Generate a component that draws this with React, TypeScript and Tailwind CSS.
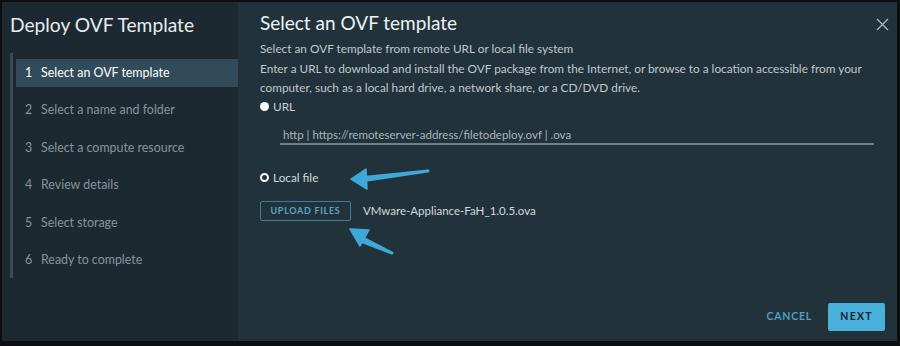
import React from "react";

const steps = [
  "Select an OVF template",
  "Select a name and folder",
  "Select a compute resource",
  "Review details",
  "Select storage",
  "Ready to complete",
];

export default function App() {
  return (
    <div
      className="w-[900px] h-[346px] bg-[#0b0f12] pt-[2px] pl-[2px] pr-[3px] pb-[5px] flex"
      style={{ fontFamily: "Lato, 'Noto Sans', sans-serif" }}
    >
      {/* Sidebar */}
      <div className="w-[236px] h-full bg-[#1d2931] flex flex-col">
        <div className="pl-[8px] pt-[10px] text-[19.2px] leading-[26px] text-[#e6ecef] whitespace-nowrap">
          Deploy OVF Template
        </div>
        <div className="ml-[8px] mt-[15px] border-l-[3px] border-[#3c4a52] flex flex-col h-[225px]">
          {steps.map((s, i) => (
            <div
              key={s}
              className={
                "flex items-center h-[28px] ml-[3px] pl-[9px] text-[12.4px] whitespace-nowrap " +
                (i === 0
                  ? "bg-[#324b5a] text-white mt-[6px]"
                  : "text-[#86949b] mt-[9.5px]")
              }
            >
              <span className="w-[16px]">{i + 1}</span>
              <span>{s}</span>
            </div>
          ))}
        </div>
      </div>

      {/* Main */}
      <div className="relative flex-1 h-full bg-[#21323a] pl-[22px] pr-[22px] flex flex-col">
        <div className="flex items-start justify-between pt-[8px]">
          <div className="text-[19px] leading-[26px] text-[#eef2f4] whitespace-nowrap">Select an OVF template</div>
          <svg width="13" height="13" viewBox="0 0 13 13" className="mt-[8px] mr-[-14px]">
            <path d="M1 1 L12 12 M12 1 L1 12" stroke="#aeb8bd" strokeWidth="1.3" />
          </svg>
        </div>
        <div className="mt-[3px] text-[11.8px] leading-[19.5px] text-[#c0c9cd] whitespace-nowrap">
          <div>Select an OVF template from remote URL or local file system</div>
          <div>
            Enter a URL to download and install the OVF package from the Internet, or browse to a location accessible from your
          </div>
          <div>computer, such as a local hard drive, a network share, or a CD/DVD drive.</div>
        </div>
        <div className="flex items-center gap-[4px] text-[11.8px] text-[#c9d1d5] h-[18px]">
          <span className="w-[9px] h-[9px] rounded-full bg-white inline-block" />
          <span>URL</span>
        </div>
        <div className="ml-[20px] mr-[1px] mt-[12px] border-b-[2px] border-[#6d8088] pb-[1px] pl-[3px] text-[11.5px] leading-[14px] text-[#aab5ba] whitespace-nowrap">
          http | https://remoteserver-address/filetodeploy.ovf | .ova
        </div>
        <div className="flex items-center gap-[4px] text-[11.8px] text-[#d3dade] mt-[24px] h-[18px]">
          <span className="w-[9px] h-[9px] rounded-full border-[2.5px] border-white bg-[#21323a] inline-block" />
          <span>Local file</span>
        </div>
        <div className="flex items-center mt-[14px]">
          <div className="h-[20px] w-[91px] border border-[#3f7c97] rounded-[2px] flex items-center justify-center text-[9px] font-bold tracking-[0.7px] text-[#5aa5c6]">
            UPLOAD FILES
          </div>
          <div className="ml-[12px] text-[11.5px] text-[#d3dade] whitespace-nowrap">VMware-Appliance-FaH_1.0.5.ova</div>
        </div>
        <div className="flex-1" />
        <div className="flex items-center justify-end gap-[16px] pb-[10px] mr-[-10px]">
          <div className="text-[10.5px] font-bold tracking-[0.8px] text-[#4e9fc2]">CANCEL</div>
          <div className="h-[28px] w-[57px] bg-[#49afdb] rounded-[2px] flex items-center justify-center text-[10.5px] font-bold tracking-[1.2px] text-[#17262e]">
            NEXT
          </div>
        </div>

        {/* annotation arrows */}
        <svg className="absolute left-0 top-0 pointer-events-none" width="659" height="339" viewBox="0 0 659 339">
          <g fill="#3ea8d8" stroke="#3ea8d8" strokeLinecap="round" strokeLinejoin="round">
            <path d="M190 169 L126 175.5 L126 178.5 Z" strokeWidth="3" />
            <path d="M113 177 L128 167 L129 187 Z" strokeWidth="1.5" />
            <path d="M154 251 L126 236.5 L124 239.5 Z" strokeWidth="3" />
            <path d="M112 227 L131 228 L122 244 Z" strokeWidth="1.5" />
          </g>
        </svg>
      </div>
    </div>
  );
}
